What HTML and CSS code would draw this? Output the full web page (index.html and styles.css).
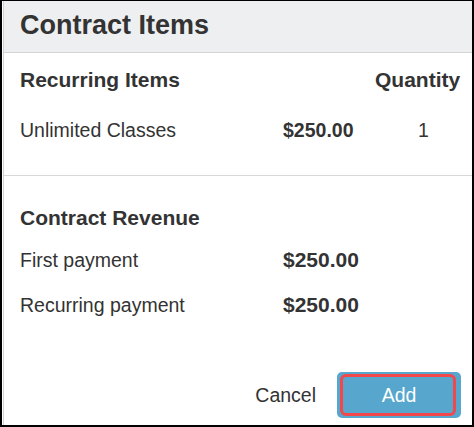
FILE: index.html
```html
<!DOCTYPE html>
<html lang="en">
<head>
<meta charset="utf-8">
<title>Contract Items</title>
<link rel="stylesheet" href="styles.css">
</head>
<body>
<div class="frame">
  <div class="modal">
    <div class="modal-header">
      <h1 class="title">Contract Items</h1>
    </div>
    <div class="section section-items">
      <div class="items-row items-head">
        <div class="cell-name">Recurring Items</div>
        <div class="cell-price"></div>
        <div class="cell-qty">Quantity</div>
      </div>
      <div class="items-row items-data">
        <div class="cell-name">Unlimited Classes</div>
        <div class="cell-price">$250.00</div>
        <div class="cell-qty qty-value">1</div>
      </div>
    </div>
    <div class="section section-revenue">
      <div class="rev-head">Contract Revenue</div>
      <div class="rev-row rev-first">
        <div class="cell-name">First payment</div>
        <div class="rev-price">$250.00</div>
      </div>
      <div class="rev-row rev-second">
        <div class="cell-name">Recurring payment</div>
        <div class="rev-price">$250.00</div>
      </div>
    </div>
    <div class="modal-footer">
      <button class="btn-cancel" type="button">Cancel</button>
      <button class="btn-add" type="button">Add</button>
    </div>
  </div>
</div>
</body>
</html>
```

FILE: styles.css
```css
* { box-sizing: border-box; }

html, body {
  margin: 0;
  padding: 0;
  background: #ffffff;
}

body {
  font-family: "Liberation Sans", Arial, sans-serif;
  color: #333333;
}

.frame {
  width: 474px;
  height: 427px;
  border-style: solid;
  border-color: #000000;
  border-width: 1px 2px 2px 2px;
  overflow: hidden;
  background: #ffffff;
}

.modal {
  margin-left: 1px;
  height: 100%;
  border-left: 1px solid #d2d2d2;
  display: flex;
  flex-direction: column;
}

.modal-header {
  background: #eeeff1;
  border-bottom: 1px solid #d4d4d4;
  padding: 6px 16px 9px 16px;
}

.title {
  margin: 0;
  font-size: 27px;
  line-height: 36px;
  font-weight: bold;
  color: #333333;
}

.section-items {
  padding: 12px 0 30px 16px;
  border-bottom: 1px solid #d8d8d8;
}

.items-row {
  display: grid;
  grid-template-columns: 263px 72px 1fr;
  line-height: 30px;
}

.items-head {
  font-size: 21px;
  font-weight: bold;
}

.items-data {
  margin-top: 20px;
  font-size: 19.5px;
}

.items-data .cell-price {
  font-weight: bold;
  white-space: nowrap;
}

.cell-qty {
  padding-left: 20px;
  white-space: nowrap;
}

.qty-value {
  text-align: center;
}

.section-revenue {
  padding: 27px 0 0 16px;
}

.rev-head {
  font-size: 21px;
  font-weight: bold;
  line-height: 30px;
}

.rev-row {
  display: grid;
  grid-template-columns: 263px 1fr;
  line-height: 30px;
  font-size: 19.5px;
}

.rev-first {
  margin-top: 12px;
}

.rev-second {
  margin-top: 15px;
}

.rev-price {
  font-size: 21px;
  font-weight: bold;
}

.modal-footer {
  display: flex;
  justify-content: flex-end;
  align-items: center;
  padding: 52px 11px 0 0;
}

.btn-cancel {
  font-family: "Liberation Sans", Arial, sans-serif;
  font-size: 19.5px;
  color: #333333;
  background: none;
  border: 0;
  padding: 0;
  margin-right: 21px;
  line-height: 46px;
}

.btn-add {
  position: relative;
  width: 124px;
  height: 46px;
  font-family: "Liberation Sans", Arial, sans-serif;
  font-size: 19.5px;
  color: #ffffff;
  background: #56a6cd;
  border: 0;
  border-radius: 5px;
  padding: 0;
}

.btn-add::after {
  content: "";
  position: absolute;
  left: 3px;
  top: 2px;
  right: 5px;
  bottom: 2px;
  border: 3px solid #f2474b;
  border-radius: 6px;
}
```
